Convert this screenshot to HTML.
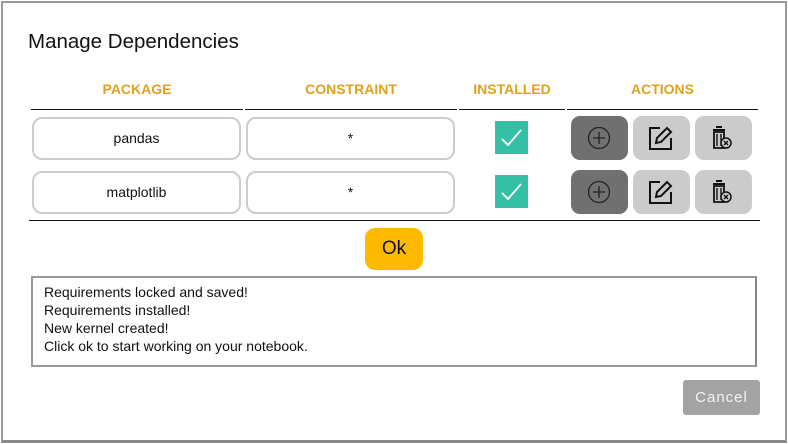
<!DOCTYPE html>
<html><head><style>
*{box-sizing:border-box;margin:0;padding:0}
body{width:788px;height:444px;background:#fff;font-family:"Liberation Sans",sans-serif;position:relative;overflow:hidden}
.dlg{position:absolute;left:1px;top:1px;width:786px;height:442px;background:#fff;border:2px solid #9a9a9a;border-bottom:3px solid #8a8a8a}
.a{position:absolute}
h1{position:absolute;left:28px;top:30px;font-size:20.5px;font-weight:normal;color:#111}
.hd{position:absolute;top:81px;font-size:14px;font-weight:bold;color:#e0a21c;text-align:center}
.ln{position:absolute;height:1px;background:#111}
.in{position:absolute;height:43px;border:2px solid #ccc;border-radius:10px;font-size:14px;color:#111;text-align:center;line-height:39px;background:#fff}
.cb{position:absolute;width:33px;height:33px;background:#35bfa4}
.bt{position:absolute;width:57px;height:44px;border-radius:9px;background:#cbcbcb}
.bt.d{background:#707070}
.bt svg{position:absolute;left:16px;top:10px}
</style></head><body>
<div class="dlg"></div>
<h1>Manage Dependencies</h1>
<div class="hd" style="left:31px;width:212px">PACKAGE</div>
<div class="hd" style="left:245px;width:212px">CONSTRAINT</div>
<div class="hd" style="left:459px;width:106px">INSTALLED</div>
<div class="hd" style="left:567px;width:191px">ACTIONS</div>
<div class="ln" style="left:31px;width:212px;top:109px"></div>
<div class="ln" style="left:245px;width:212px;top:109px"></div>
<div class="ln" style="left:459px;width:106px;top:109px"></div>
<div class="ln" style="left:567px;width:191px;top:109px"></div>

<div class="in" style="left:32px;top:117px;width:209px">pandas</div>
<div class="in" style="left:246px;top:117px;width:209px">*</div>
<div class="in" style="left:32px;top:171px;width:209px">matplotlib</div>
<div class="in" style="left:246px;top:171px;width:209px">*</div>

<div class="cb" style="left:495px;top:121px"><svg width="33" height="33"><path d="M7 18 L13 24 L26 9" stroke="#fff" stroke-width="1.8" fill="none"/></svg></div>
<div class="cb" style="left:495px;top:175px"><svg width="33" height="33"><path d="M7 18 L13 24 L26 9" stroke="#fff" stroke-width="1.8" fill="none"/></svg></div>

<div class="bt d" style="left:571px;top:116px"><svg width="24" height="24"><circle cx="12" cy="12" r="10.5" stroke="#222" stroke-width="1.3" fill="none"/><path d="M12 6V18M6 12H18" stroke="#222" stroke-width="1.3"/></svg></div>
<div class="bt" style="left:633px;top:116px"><svg width="24" height="24"><path d="M11 2H1V23H22V12" stroke="#111" stroke-width="2" fill="none"/><path d="M7 17L8 12L18 2L22 6L12 16Z" stroke="#111" stroke-width="2" fill="none"/></svg></div>
<div class="bt" style="left:695px;top:116px"><svg width="26" height="26"><path d="M5 1H11M2 4H14" stroke="#111" stroke-width="2"/><path d="M3 6H13V22H3Z" stroke="#111" stroke-width="1.8" fill="none"/><path d="M6 8V20M10 8V20" stroke="#111" stroke-width="1.4"/><circle cx="15" cy="17" r="5" fill="#cbcbcb" stroke="#111" stroke-width="1.5"/><path d="M13 15L17 19M17 15L13 19" stroke="#111" stroke-width="1.4"/></svg></div>

<div class="bt d" style="left:571px;top:170px"><svg width="24" height="24"><circle cx="12" cy="12" r="10.5" stroke="#222" stroke-width="1.3" fill="none"/><path d="M12 6V18M6 12H18" stroke="#222" stroke-width="1.3"/></svg></div>
<div class="bt" style="left:633px;top:170px"><svg width="24" height="24"><path d="M11 2H1V23H22V12" stroke="#111" stroke-width="2" fill="none"/><path d="M7 17L8 12L18 2L22 6L12 16Z" stroke="#111" stroke-width="2" fill="none"/></svg></div>
<div class="bt" style="left:695px;top:170px"><svg width="26" height="26"><path d="M5 1H11M2 4H14" stroke="#111" stroke-width="2"/><path d="M3 6H13V22H3Z" stroke="#111" stroke-width="1.8" fill="none"/><path d="M6 8V20M10 8V20" stroke="#111" stroke-width="1.4"/><circle cx="15" cy="17" r="5" fill="#cbcbcb" stroke="#111" stroke-width="1.5"/><path d="M13 15L17 19M17 15L13 19" stroke="#111" stroke-width="1.4"/></svg></div>

<div class="ln" style="left:29px;width:731px;top:220px;height:1px"></div>
<div class="a" style="left:365px;top:228px;width:58px;height:42px;background:#ffba00;border-radius:10px;font-size:19px;line-height:42px;text-align:center;color:#111">Ok</div>
<div class="a" style="left:31px;top:276px;width:726px;height:91px;border:2px solid #999;border-right-color:#888;padding:5px 0 0 11px;font-size:14px;line-height:18px;color:#111">Requirements locked and saved!<br>Requirements installed!<br>New kernel created!<br>Click ok to start working on your notebook.</div>
<div class="a" style="left:683px;top:380px;width:77px;height:35px;background:#a3a3a3;border-radius:3px;color:#f4f4f4;font-size:15px;letter-spacing:1px;line-height:35px;text-align:center">Cancel</div>
</body></html>
